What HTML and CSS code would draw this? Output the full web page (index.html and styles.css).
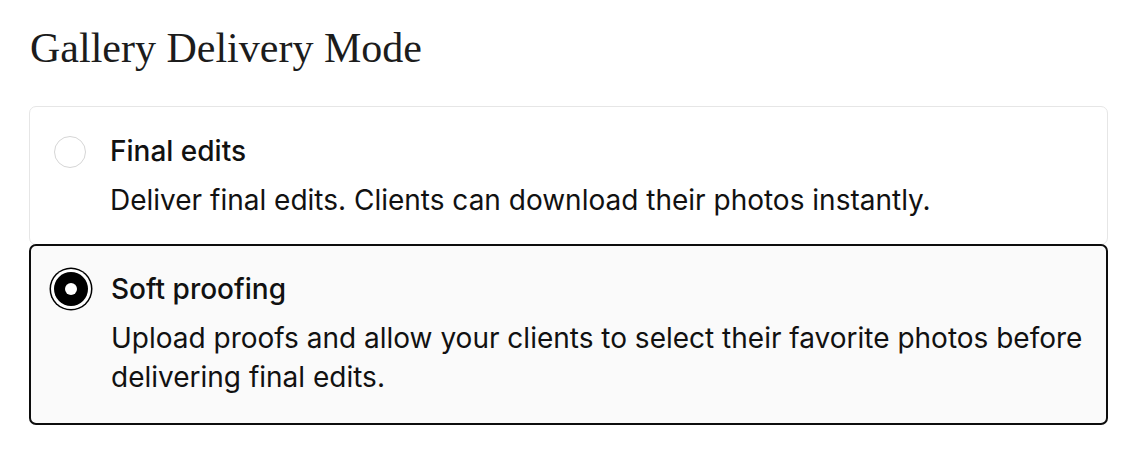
FILE: index.html
```html
<!DOCTYPE html>
<html lang="en">
<head>
<meta charset="utf-8">
<title>Gallery Delivery Mode</title>
<link rel="stylesheet" href="styles.css">
</head>
<body>
<main class="page">
  <h1 class="heading">Gallery Delivery Mode</h1>
  <div class="options" role="radiogroup">
    <label class="option">
      <span class="radio"></span>
      <span class="option-text">
        <span class="option-title">Final edits</span>
        <span class="option-desc">Deliver final edits. Clients can download their photos instantly.</span>
      </span>
    </label>
    <label class="option option-selected">
      <span class="radio radio-checked"></span>
      <span class="option-text">
        <span class="option-title">Soft proofing</span>
        <span class="option-desc">Upload proofs and allow your clients to select their favorite photos before delivering final edits.</span>
      </span>
    </label>
  </div>
</main>
</body>
</html>
```

FILE: styles.css
```css
html, body {
  margin: 0;
  padding: 0;
  background: #ffffff;
}

.page {
  padding: 0 28px 0 29px;
  font-family: "Inter", "Noto Sans", sans-serif;
  color: #111111;
}

.heading {
  margin: 0;
  padding-top: 24px;
  padding-left: 1px;
  height: 106px;
  box-sizing: border-box;
  font-family: "Liberation Serif", "DejaVu Serif", serif;
  font-weight: 400;
  font-size: 42px;
  line-height: 48px;
  color: #1c1c1c;
}

.options {
  display: flex;
  flex-direction: column;
}

.option {
  display: flex;
  align-items: flex-start;
  gap: 24px;
  padding: 25px 12px 24px 24px;
  border: 1.5px solid #e6e6e6;
  border-radius: 7px;
  background: #ffffff;
}

.option-selected {
  margin-top: -1.5px;
  border: 2px solid #0d0d0d;
  background: #fafafa;
  padding-top: 24px;
  padding-bottom: 26px;
  position: relative;
}

.radio {
  flex: 0 0 32px;
  width: 32px;
  height: 32px;
  margin-top: 3.5px;
  box-sizing: border-box;
  border: 1.5px solid #d6d6d6;
  border-radius: 50%;
  background: #ffffff;
  display: flex;
  align-items: center;
  justify-content: center;
}

.radio-checked {
  border: none;
  background: #000000;
  box-shadow: 0 0 0 1px #000000, 0 0 0 4px #ffffff, 0 0 0 5.5px #000000;
}

.radio-checked::after {
  content: "";
  width: 12px;
  height: 12px;
  border-radius: 50%;
  background: #ffffff;
}

.option-text {
  display: flex;
  flex-direction: column;
  gap: 10px;
}

.option-title {
  font-size: 28px;
  line-height: 39px;
  font-weight: 500;
}

.option-desc {
  font-size: 28px;
  line-height: 39px;
  font-weight: 400;
}
```
